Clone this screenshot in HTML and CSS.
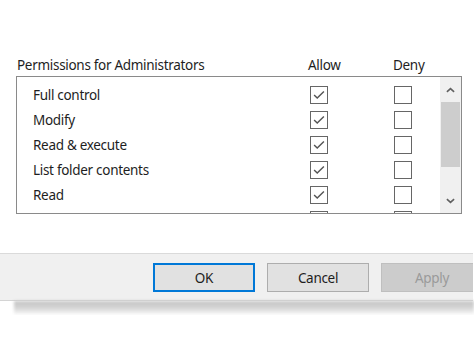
FILE: index.html
```html
<!DOCTYPE html>
<html>
<head>
<meta charset="utf-8">
<link rel="stylesheet" href="styles.css">
</head>
<body>
<div class="page">
  <div class="header">
    <span class="h-name">Permissions for Administrators</span>
    <span class="h-allow">Allow</span>
    <span class="h-deny">Deny</span>
  </div>
  <div class="listbox">
    <div class="rows">
      <div class="row"><span class="name">Full control</span><span class="cb checked"><svg viewBox="0 0 18 18"><polyline points="3.5,9 7,12.5 14.5,5"/></svg></span><span class="cb"></span></div>
      <div class="row"><span class="name">Modify</span><span class="cb checked"><svg viewBox="0 0 18 18"><polyline points="3.5,9 7,12.5 14.5,5"/></svg></span><span class="cb"></span></div>
      <div class="row"><span class="name">Read &amp; execute</span><span class="cb checked"><svg viewBox="0 0 18 18"><polyline points="3.5,9 7,12.5 14.5,5"/></svg></span><span class="cb"></span></div>
      <div class="row"><span class="name">List folder contents</span><span class="cb checked"><svg viewBox="0 0 18 18"><polyline points="3.5,9 7,12.5 14.5,5"/></svg></span><span class="cb"></span></div>
      <div class="row"><span class="name">Read</span><span class="cb checked"><svg viewBox="0 0 18 18"><polyline points="3.5,9 7,12.5 14.5,5"/></svg></span><span class="cb"></span></div>
      <div class="row"><span class="name"></span><span class="cb"></span><span class="cb"></span></div>
    </div>
    <div class="scrollbar">
      <div class="arrow"><svg viewBox="0 0 10 6"><polyline points="1,5 5,1.5 9,5"/></svg></div>
      <div class="track"><div class="thumb"></div></div>
      <div class="arrow"><svg viewBox="0 0 10 6"><polyline points="1,1 5,4.5 9,1"/></svg></div>
    </div>
  </div>
  <div class="dialog-bottom">
    <div class="panel">
      <button class="btn primary">OK</button>
      <button class="btn">Cancel</button>
      <button class="btn disabled">Apply</button>
    </div>
    <div class="shadow"></div>
  </div>
</div>
</body>
</html>
```
FILE: styles.css
```css
html, body {
  margin: 0;
  padding: 0;
  background: #ffffff;
}
.page {
  padding-top: 55px;
  font-family: "Noto Sans", "Open Sans", sans-serif;
  font-size: 13.5px;
  color: #1e1e1e;
  letter-spacing: -0.3px;
}
.header {
  display: grid;
  grid-template-columns: 291px 85px 60px;
  padding-left: 17px;
  height: 21px;
  line-height: 20px;
}
.listbox {
  margin-left: 16px;
  width: 444px;
  height: 136px;
  border: 1px solid #8a8a8a;
  display: flex;
  overflow: hidden;
  background: #fff;
}
.rows {
  flex: 1;
  min-width: 0;
  padding-top: 5px;
}
.row {
  display: grid;
  grid-template-columns: 211px 18px 18px;
  column-gap: 66px;
  align-items: center;
  height: 25px;
  padding-left: 16px;
}
.name {
  line-height: 18px;
  white-space: nowrap;
}
.cb {
  width: 16px;
  height: 16px;
  border: 1px solid #666;
  display: block;
  background: #fff;
}
.cb svg {
  width: 16px;
  height: 16px;
  display: block;
  fill: none;
  stroke: #555;
  stroke-width: 1.6;
}
.scrollbar {
  flex: none;
  width: 21px;
  background: #f0f0f0;
  display: flex;
  flex-direction: column;
}
.arrow {
  height: 25px;
  display: flex;
  align-items: center;
  justify-content: center;
}
.arrow svg {
  width: 9px;
  height: 6px;
  fill: none;
  stroke: #606060;
  stroke-width: 1.8;
}
.track {
  flex: 1;
  padding: 0 1px;
}
.thumb {
  height: 65px;
  background: #cdcdcd;
}
.dialog-bottom {
  margin-top: 39px;
}
.panel {
  width: 473px;
  height: 48px;
  box-sizing: border-box;
  background: #f0f0f0;
  border-top: 1px solid #dadada;
  border-bottom: 1px solid #d4d4d4;
  display: flex;
  align-items: center;
  padding-left: 153px;
  column-gap: 12px;
  overflow: hidden;
}
.shadow {
  margin-left: 14px;
  height: 14px;
  background: linear-gradient(to bottom, #c4c4c4 0%, #d2d2d2 45%, #ececec 80%, #ffffff 100%);
  filter: blur(1.5px);
}
.btn {
  flex: none;
  width: 102px;
  height: 29px;
  margin-top: 1px;
  font-family: "Noto Sans", "Open Sans", sans-serif;
  font-size: 13.5px;
  letter-spacing: -0.3px;
  color: #1e1e1e;
  background: #e1e1e1;
  border: 1px solid #adadad;
  padding: 0;
}
.btn.primary {
  border: 2px solid #0078d7;
}
.btn.disabled {
  background: #cccccc;
  border-color: #bfbfbf;
  color: #9a9a9a;
}
```
